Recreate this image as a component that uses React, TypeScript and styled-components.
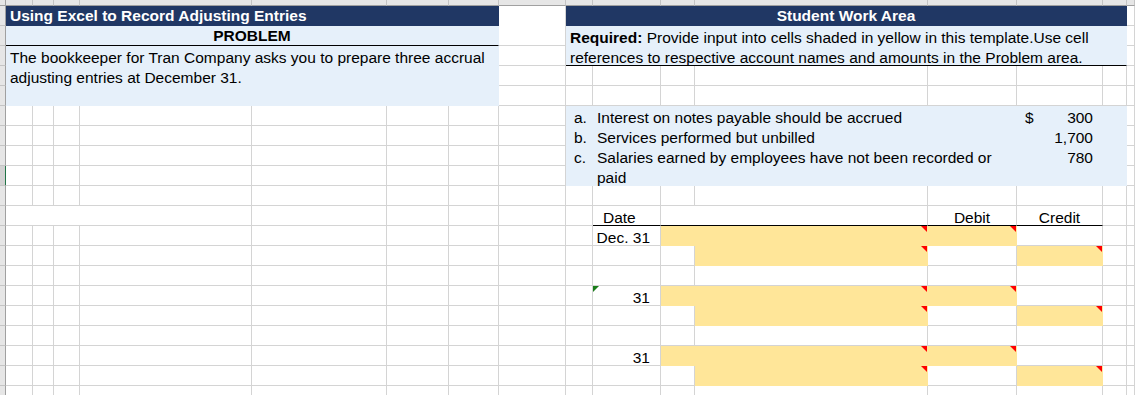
import React from "react";
import styled, { createGlobalStyle, css } from "styled-components";

const GRID = "#d4d4d4";
const NAVY = "#203764";
const PALE = "#e6f0fa";
const GOLD = "#ffe699";

// column widths in px, c1..c16 (the row header strip is extra)
const COLS = [27, 21, 26, 172, 135, 62, 50, 67, 27, 68, 34, 233, 89, 86, 24, 8];
const ROWS = 20;
const ACTIVE_ROW = 9;

const GlobalStyle = createGlobalStyle`
  html, body {
    margin: 0;
    padding: 0;
    background: #fff;
    overflow: hidden;
  }
  body {
    font-family: "Liberation Sans", Arial, sans-serif;
    font-size: 15.5px;
    color: #000;
  }
`;

const Sheet = styled.div`
  display: grid;
  grid-template-columns: 6px ${COLS.map((w) => `${w}px`).join(" ")};
  grid-template-rows: 6px repeat(${ROWS}, 20px);
  width: 1135px;
  height: 395px;
  overflow: hidden;
`;

const Corner = styled.div`
  grid-row: 1;
  grid-column: 1;
  background: #e6e6e6;
  border-right: 1px solid #a0a0a0;
  border-bottom: 1px solid #a0a0a0;
`;

const ColHead = styled.div<{ $c: number }>`
  grid-row: 1;
  grid-column: ${(p) => p.$c + 1};
  background: #e6e6e6;
  border-right: 1px solid #c4c4c4;
  border-bottom: 1px solid #a0a0a0;
`;

const RowHead = styled.div<{ $r: number; $active?: boolean }>`
  grid-row: ${(p) => p.$r + 1};
  grid-column: 1;
  background: ${(p) => (p.$active ? "#d2d2d2" : "#e6e6e6")};
  border-bottom: 1px solid #c4c4c4;
  border-right: ${(p) => (p.$active ? "2px solid #217346" : "1px solid #a0a0a0")};
  margin-right: ${(p) => (p.$active ? "-1px" : "0")};
`;

type Place = { $r: number; $c: number; $rs?: number; $cs?: number };
type Fill = "navy" | "pale" | "gold";

const fillColor = (f?: Fill) =>
  f === "navy" ? NAVY : f === "pale" ? PALE : f === "gold" ? GOLD : undefined;

const Cell = styled.div<Place & { $fill?: Fill; $rule?: boolean }>`
  grid-row: ${(p) => p.$r + 1} / span ${(p) => p.$rs ?? 1};
  grid-column: ${(p) => p.$c + 1} / span ${(p) => p.$cs ?? 1};
  position: relative;
  min-width: 0;
  white-space: nowrap;
  line-height: 20px;
  padding-top: 2px;
  background: ${(p) => fillColor(p.$fill) ?? "#fff"};
  border-right: 1px solid ${(p) => fillColor(p.$fill) ?? GRID};
  border-bottom: 1px solid ${(p) => (p.$rule ? "#000" : fillColor(p.$fill) ?? GRID)};
`;

const Banner = styled(Cell)<{ $center?: boolean }>`
  color: #fff;
  font-weight: bold;
  line-height: 19px;
  padding: 0 4px;
  text-align: ${(p) => (p.$center ? "center" : "left")};
`;

const SectionHead = styled(Cell)`
  font-weight: bold;
  text-align: center;
  padding-top: 0;
`;

const Prose = styled(Cell)`
  white-space: normal;
  padding: 2px 8px 0 4px;
  overflow: hidden;
`;

const ItemLetter = styled(Cell)`
  padding-left: 8px;
`;

const ItemText = styled(Cell)`
  white-space: normal;
  padding-left: 4px;
  padding-right: 6px;
`;

const Amount = styled(Cell)`
  display: flex;
  justify-content: space-between;
  padding: 2px 9px 0 8px;
`;

const ColLabel = styled(Cell)<{ $align: "left" | "center" | "right" }>`
  text-align: ${(p) => p.$align};
  padding-left: ${(p) => (p.$align === "left" ? "10px" : "0")};
`;

const DateCell = styled(Cell)<{ $flag?: boolean }>`
  text-align: right;
  padding-right: 10px;
  ${(p) =>
    p.$flag &&
    css`
      &::before {
        content: "";
        position: absolute;
        left: 0;
        top: 0;
        border-top: 6px solid #1a7d1a;
        border-right: 6px solid transparent;
      }
    `}
`;

// yellow input cell with the red comment marker in its corner
const Entry = styled(Cell)`
  &::after {
    content: "";
    position: absolute;
    right: 0;
    top: 0;
    border-top: 6px solid #ff0000;
    border-left: 6px solid transparent;
  }
`;

const Blank = styled(Cell)``;

type Item = { key: string; r: number; c: number; rs: number; cs: number; el: React.ReactNode };

const items: Item[] = [];
const add = (r: number, c: number, rs: number, cs: number, el: React.ReactElement) =>
  items.push({ key: `${r}-${c}`, r, c, rs, cs, el });

// problem side
add(1, 1, 1, 7,
  <Banner $r={1} $c={1} $cs={7} $fill="navy">Using Excel to Record Adjusting Entries</Banner>);
add(1, 8, 2, 1, <Blank $r={1} $c={8} $rs={2} />);
add(2, 1, 1, 7,
  <SectionHead $r={2} $c={1} $cs={7} $fill="pale" $rule>PROBLEM</SectionHead>);
add(3, 1, 3, 7,
  <Prose $r={3} $c={1} $rs={3} $cs={7} $fill="pale">
    The bookkeeper for Tran Company asks you to prepare three accrual adjusting entries at
    December 31.
  </Prose>);
add(11, 1, 1, 4, <Blank $r={11} $c={1} $cs={4} />);

// student side
add(1, 9, 1, 7,
  <Banner $r={1} $c={9} $cs={7} $fill="navy" $center>Student Work Area</Banner>);
add(2, 9, 2, 7,
  <Prose $r={2} $c={9} $rs={2} $cs={7} $fill="pale" $rule>
    <b>Required:</b> Provide input into cells shaded in yellow in this template.Use cell
    references to respective account names and amounts in the Problem area.
  </Prose>);

const facts = [
  { r: 6, rs: 1, letter: "a.", text: "Interest on notes payable should be accrued", dollar: true, amt: "300" },
  { r: 7, rs: 1, letter: "b.", text: "Services performed but unbilled", dollar: false, amt: "1,700" },
  { r: 8, rs: 2, letter: "c.", text: "Salaries earned by employees have not been recorded or paid", dollar: false, amt: "780" },
];
facts.forEach((f) => {
  add(f.r, 9, f.rs, 1, <ItemLetter $r={f.r} $c={9} $rs={f.rs} $fill="pale">{f.letter}</ItemLetter>);
  add(f.r, 10, f.rs, 4,
    <ItemText $r={f.r} $c={10} $rs={f.rs} $cs={4} $fill="pale">{f.text}</ItemText>);
  add(f.r, 14, f.rs, 1,
    <Amount $r={f.r} $c={14} $rs={f.rs} $fill="pale">
      <span>{f.dollar ? "$" : ""}</span>
      <span>{f.amt}</span>
    </Amount>);
  add(f.r, 15, f.rs, 1, <Blank $r={f.r} $c={15} $rs={f.rs} $fill="pale" />);
});

add(11, 10, 1, 1, <ColLabel $r={11} $c={10} $align="left" $rule>Date</ColLabel>);
add(11, 11, 1, 2, <ColLabel $r={11} $c={11} $cs={2} $align="left" $rule />);
add(11, 13, 1, 1, <ColLabel $r={11} $c={13} $align="center" $rule>Debit</ColLabel>);
add(11, 14, 1, 1, <ColLabel $r={11} $c={14} $align="center" $rule>Credit</ColLabel>);

const entries = [
  { r: 12, date: "Dec. 31", flag: false },
  { r: 15, date: "31", flag: true },
  { r: 18, date: "31", flag: false },
];
entries.forEach(({ r, date, flag }) => {
  add(r, 10, 1, 1, <DateCell $r={r} $c={10} $flag={flag}>{date}</DateCell>);
  add(r, 11, 1, 2, <Entry $r={r} $c={11} $cs={2} $fill="gold" />);
  add(r, 13, 1, 1, <Entry $r={r} $c={13} $fill="gold" />);
  add(r + 1, 12, 1, 1, <Entry $r={r + 1} $c={12} $fill="gold" />);
  add(r + 1, 14, 1, 1, <Entry $r={r + 1} $c={14} $fill="gold" />);
});

function buildCells() {
  const taken = new Set<string>();
  items.forEach((it) => {
    for (let r = it.r; r < it.r + it.rs; r++)
      for (let c = it.c; c < it.c + it.cs; c++) taken.add(`${r}:${c}`);
  });
  const out: React.ReactNode[] = items.map((it) => (
    <React.Fragment key={it.key}>{it.el}</React.Fragment>
  ));
  for (let r = 1; r <= ROWS; r++)
    for (let c = 1; c <= COLS.length; c++)
      if (!taken.has(`${r}:${c}`)) out.push(<Blank key={`b${r}-${c}`} $r={r} $c={c} />);
  return out;
}

export default function App() {
  return (
    <>
      <GlobalStyle />
      <Sheet>
        <Corner />
        {COLS.map((_, i) => (
          <ColHead key={`ch${i}`} $c={i + 1} />
        ))}
        {Array.from({ length: ROWS }, (_, i) => (
          <RowHead key={`rh${i}`} $r={i + 1} $active={i + 1 === ACTIVE_ROW} />
        ))}
        {buildCells()}
      </Sheet>
    </>
  );
}
